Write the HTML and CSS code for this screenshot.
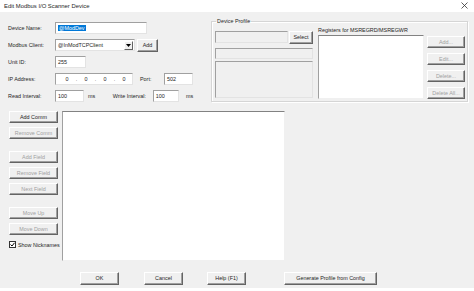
FILE: index.html
```html
<!DOCTYPE html>
<html lang="en">
  <head>
    <meta charset="UTF-8" />
    <meta name="viewport" content="width=device-width, initial-scale=1.0" />
    <title>Edit Modbus I/O Scanner Device</title>
    <link rel="stylesheet" href="styles.css">
  </head>
  <body>
    <div class="window">
      <!-- TITLE BAR -->
      <div class="titlebar">
        <span class="title">Edit Modbus I/O Scanner Device</span>
        <svg class="close" width="7" height="7" viewBox="0 0 7 7">
          <path d="M0.5 0.5 L6.5 6.5 M6.5 0.5 L0.5 6.5" stroke="#333" stroke-width="0.8" />
        </svg>
      </div>

      <div class="dialog">
        <!-- TOP: device settings + profile -->
        <div class="top">
          <div class="device-form">
            <div class="form-row">
              <label class="lbl">Device Name:</label>
              <div class="edit w-name"><span class="selected">@ModDev</span></div>
            </div>
            <div class="form-row">
              <label class="lbl">Modbus Client:</label>
              <div class="combo">
                <span class="combo-text">@InModTCPClient</span>
                <span class="combo-btn">
                  <svg width="5" height="3" viewBox="0 0 5 3"><path d="M0 0 H5 L2.5 3 Z" fill="#000" /></svg>
                </span>
              </div>
              <button class="btn btn-add">Add</button>
            </div>
            <div class="form-row">
              <label class="lbl">Unit ID:</label>
              <div class="edit w-unit">255</div>
            </div>
            <div class="form-row">
              <label class="lbl">IP Address:</label>
              <div class="edit ip">
                <span class="octet">0</span><span class="dot">.</span>
                <span class="octet">0</span><span class="dot">.</span>
                <span class="octet">0</span><span class="dot">.</span>
                <span class="octet">0</span>
              </div>
              <label class="lbl-port">Port:</label>
              <div class="edit w-short">502</div>
            </div>
            <div class="form-row">
              <label class="lbl">Read Interval:</label>
              <div class="edit w-read">100</div>
              <span class="unit">ms</span>
              <label class="lbl-write">Write Interval:</label>
              <div class="edit w-short">100</div>
              <span class="unit unit-2">ms</span>
            </div>
          </div>

          <fieldset class="profile">
            <legend>Device Profile</legend>
            <div class="profile-left">
              <div class="profile-row">
                <div class="edit disabled w-profile"></div>
                <button class="btn btn-select">Select</button>
              </div>
              <div class="edit disabled w-profile2"></div>
              <div class="edit disabled profile-notes"></div>
            </div>
            <div class="profile-regs">
              <div class="regs-label">Registers for MSREGRD/MSREGWR</div>
              <div class="listbox regs-list"></div>
            </div>
            <div class="profile-buttons">
              <button class="btn" disabled>Add...</button>
              <button class="btn" disabled>Edit...</button>
              <button class="btn" disabled>Delete...</button>
              <button class="btn" disabled>Delete All...</button>
            </div>
          </fieldset>
        </div>

        <!-- MIDDLE: comm buttons + list -->
        <div class="middle">
          <div class="comm-buttons">
            <button class="btn">Add Comm</button>
            <button class="btn" disabled>Remove Comm</button>
            <button class="btn gap-big" disabled>Add Field</button>
            <button class="btn" disabled>Remove Field</button>
            <button class="btn" disabled>Next Field</button>
            <button class="btn gap-big" disabled>Move Up</button>
            <button class="btn" disabled>Move Down</button>
            <div class="check-row">
              <span class="checkbox">
                <svg width="5" height="5" viewBox="0 0 5 5"><path d="M0.5 2.5 L2 4 L4.5 0.8" stroke="#000" stroke-width="1" fill="none" /></svg>
              </span>
              <span>Show Nicknames</span>
            </div>
          </div>
          <div class="listbox comm-list"></div>
        </div>

        <!-- FOOTER -->
        <div class="footer">
          <button class="btn btn-ok">OK</button>
          <button class="btn btn-cancel">Cancel</button>
          <button class="btn btn-help">Help (F1)</button>
          <button class="btn btn-generate">Generate Profile from Config</button>
        </div>
      </div>
    </div>
  </body>
</html>
```

FILE: styles.css
```css
* {
  box-sizing: border-box;
  margin: 0;
  padding: 0;
}

html,
body {
  background-color: #ffffff;
  font-family: "Liberation Sans", Arial, sans-serif;
  font-size: 5.4px;
  color: #1e1e1e;
}

.window {
  width: 474px;
  height: 291px;
}

/* TITLE BAR */
.titlebar {
  height: 12px;
  display: flex;
  align-items: center;
  justify-content: space-between;
  padding: 0 6px 1px 4px;
  background-color: #ffffff;
}

.title {
  font-size: 5.9px;
  line-height: 8px;
}

.close {
  display: block;
}

.dialog {
  height: 276px;
  background-color: #f0f0f0;
  display: flex;
  flex-direction: column;
}

/* COMMON CONTROLS */
.btn {
  display: flex;
  align-items: center;
  justify-content: center;
  height: 12px;
  font-family: inherit;
  font-size: 5.4px;
  line-height: 7px;
  color: #1e1e1e;
  background-color: #f0f0f0;
  border: 1px solid;
  border-color: #ffffff #646464 #646464 #ffffff;
  box-shadow: inset -1px -1px 0 #a0a0a0;
  white-space: nowrap;
}

.btn:disabled {
  color: #a0a0a0;
}

.edit {
  height: 12px;
  line-height: 10px;
  padding-left: 2px;
  background-color: #ffffff;
  border: 1px solid;
  border-color: #a0a0a0 #e3e3e3 #e3e3e3 #a0a0a0;
  white-space: nowrap;
}

.edit.disabled {
  background-color: #f0f0f0;
}

.listbox {
  background-color: #ffffff;
  border: 1px solid;
  border-color: #828282 #f0f0f0 #f0f0f0 #a0a0a0;
}

.selected {
  background-color: #0078d7;
  color: #ffffff;
  padding: 0 1px;
}

/* TOP SECTION */
.top {
  display: flex;
  align-items: flex-start;
  padding: 6px 0 0 8px;
}

.device-form {
  width: 203px;
  margin-top: 4px;
  display: flex;
  flex-direction: column;
  gap: 5px;
}

.form-row {
  display: flex;
  align-items: center;
  height: 12px;
}

.lbl {
  width: 47px;
  flex-shrink: 0;
}

.w-name {
  width: 92px;
}

.combo {
  width: 80px;
  height: 12px;
  display: flex;
  align-items: center;
  justify-content: space-between;
  padding: 1px 1px 1px 2px;
  background-color: #ffffff;
  border: 1px solid;
  border-color: #a0a0a0 #e3e3e3 #e3e3e3 #a0a0a0;
}

.combo-btn {
  width: 9px;
  height: 9px;
  display: flex;
  align-items: center;
  justify-content: center;
  background-color: #f0f0f0;
  border: 1px solid;
  border-color: #ffffff #646464 #646464 #ffffff;
}

.combo-btn svg {
  display: block;
}

.btn-add {
  width: 21px;
  height: 13px;
  margin-left: 2px;
}

.w-unit {
  width: 31px;
}

.ip {
  width: 78px;
  display: flex;
  padding-left: 6px;
}

.octet {
  width: 10px;
  text-align: center;
}

.dot {
  width: 9px;
  text-align: center;
}

.lbl-port {
  width: 24px;
  margin-left: 7px;
}

.w-short {
  width: 29px;
}

.w-read {
  width: 32px;
}

.unit {
  width: 28px;
  margin-left: 4px;
}

.unit-2 {
  margin-left: 7px;
}

.lbl-write {
  width: 45px;
}

/* DEVICE PROFILE GROUP */
.profile {
  width: 257px;
  display: flex;
  align-items: flex-start;
  padding: 3px 2px 2px 3px;
  border: 1px solid #d5d5d5;
  box-shadow: 1px 1px 0 #ffffff, inset 1px 1px 0 #ffffff;
}

.profile legend {
  margin-left: 1px;
  padding: 0 1px;
  line-height: 6px;
}

.profile-left {
  width: 98px;
  margin-top: 4px;
  display: flex;
  flex-direction: column;
}

.profile-row {
  display: flex;
  align-items: flex-start;
}

.w-profile {
  width: 73px;
}

.btn-select {
  width: 24px;
  height: 13px;
  margin-left: 1px;
}

.w-profile2 {
  height: 11px;
  margin-top: 4px;
}

.profile-notes {
  height: 37px;
  margin-top: 2px;
}

.profile-regs {
  width: 106px;
  margin-left: 5px;
}

.regs-label {
  line-height: 7px;
}

.regs-list {
  height: 64px;
  margin-top: 1px;
}

.profile-buttons {
  width: 38px;
  margin-left: 3px;
  margin-top: 9px;
  display: flex;
  flex-direction: column;
  gap: 5px;
}

.profile-buttons .btn {
  width: 38px;
}

/* MIDDLE SECTION */
.middle {
  display: flex;
  align-items: flex-start;
  padding-left: 9px;
  margin-top: 9px;
}

.comm-buttons {
  width: 49px;
  display: flex;
  flex-direction: column;
  gap: 4px;
}

.comm-buttons .btn {
  width: 49px;
}

.comm-buttons .gap-big {
  margin-top: 8px;
}

.check-row {
  display: flex;
  align-items: center;
  gap: 2px;
  margin-top: 2px;
  white-space: nowrap;
}

.checkbox {
  width: 7px;
  height: 7px;
  display: flex;
  align-items: center;
  justify-content: center;
  background-color: #ffffff;
  border: 1px solid #333;
}

.checkbox svg {
  display: block;
}

.comm-list {
  width: 223px;
  height: 150px;
  margin-left: 4px;
}

/* FOOTER */
.footer {
  display: flex;
  margin-top: 11px;
  padding-left: 80px;
}

.footer .btn {
  height: 13px;
  width: 39px;
}

.btn-cancel {
  margin-left: 25px;
}

.btn-help {
  margin-left: 24px;
}

.footer .btn-generate {
  width: 93px;
  margin-left: 38px;
}
```
